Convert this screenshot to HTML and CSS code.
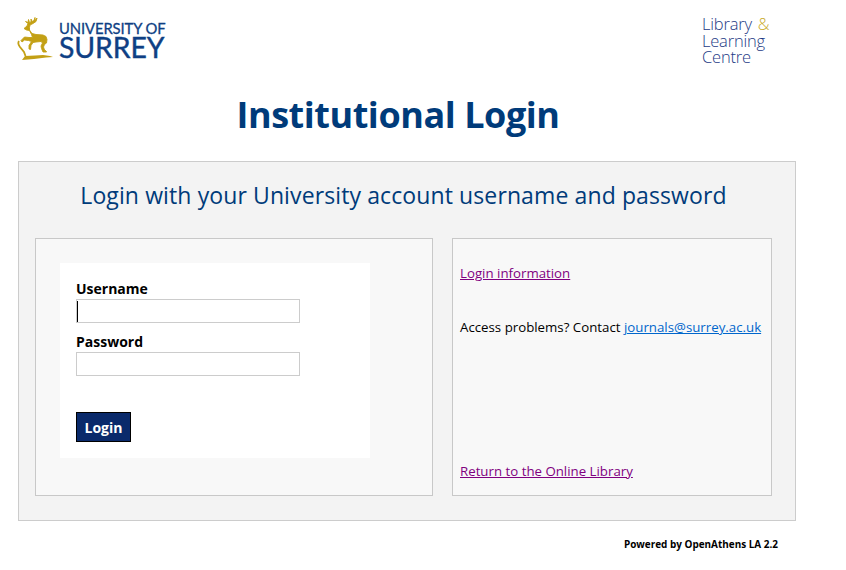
FILE: index.html
```html
<!DOCTYPE html>
<html lang="en">
<head>
<meta charset="utf-8">
<title>Institutional Login</title>
<link rel="stylesheet" href="styles.css">
</head>
<body>
<div class="page">
  <header class="logos">
    <div class="surrey">
      <svg class="stag" width="42" height="50" viewBox="0 0 42 50" aria-hidden="true">
        <path fill="#c3a015" stroke="#c3a015" stroke-width="0.900" stroke-linejoin="round" d="M10 14.500l3-2.500 1-2.500-2.500-2 2.500 1 .5-3 1 3 1.500-.5 0-3 1 2.500 2-1 1-3 0 3 2-2.500-1 3.500-3 2-3 1.500-.5 2.500 0 2.500 2.500 3.500 4 1 7 .5 3 1.500 1 3-.5 3.500-2 1.500-1 2.500 1 3 1.500 1 .5 1-3.500 0-1.500-3.500-.5-2.500 1.500-3-1.500-1.500-5 .5-3 .5-2 3-.5 4-1.500-.5 0-3.500 2.500-4-3-1-4-.5-2.500 2-1-1.500 3.500-3.500 4.500.5 3.500 0-1-3-2-4-3-.5z"/>
        <path fill="none" stroke="#c3a015" stroke-width="1.800" d="M5 27c-1.500 2-.5 4 1 6l4 5 1.500 4"/>
        <path fill="#c3a015" d="M8 46l3-4 10-.5 8-.5 7 1 3 1-7 .5-12 1.500z"/>
      </svg>
      <div class="wordmark">
        <span class="uni">UNIVERSITY OF</span>
        <span class="sur">SURREY</span>
      </div>
    </div>
    <div class="llc">Library <span class="amp">&amp;</span><br>Learning<br>Centre</div>
  </header>
  <h1 class="title">Institutional Login</h1>
  <main class="outer">
    <h2 class="sub">Login with your University account username and password</h2>
    <div class="cols">
      <section class="panel left">
        <form class="form">
          <label class="label" for="u">Username</label>
          <div class="input focus" id="u"><span class="caret"></span></div>
          <label class="label second" for="p">Password</label>
          <div class="input" id="p"></div>
          <button type="button" class="btn">Login</button>
        </form>
      </section>
      <section class="panel right">
        <p class="info"><a class="visited" href="#">Login information</a></p>
        <p class="access">Access problems? Contact <a class="mail" href="#">journals@surrey.ac.uk</a></p>
        <p class="ret"><a class="visited" href="#">Return to the Online Library</a></p>
      </section>
    </div>
  </main>
  <footer class="foot">Powered by OpenAthens LA 2.2</footer>
</div>
</body>
</html>
```
FILE: styles.css
```css
* { box-sizing: border-box; }
html, body { margin: 0; padding: 0; background: #fff; }
body { font-family: "Open Sans", "Liberation Sans", sans-serif; color: #000; }
.page { width: 846px; height: 570px; overflow: hidden; padding-left: 18px; }
.logos { height: 91px; width: 760px; display: flex; justify-content: space-between; align-items: flex-start; }
.surrey { display: flex; align-items: flex-start; margin-top: 14px; gap: 3px; margin-left: -4px; }
.wordmark { display: flex; flex-direction: column; color: #0f3f84; font-family: "Lato", sans-serif; padding-top: 8px; white-space: nowrap; }
.uni { font-size: 14.800px; line-height: 13px; letter-spacing: -0.1px; font-weight: 400; -webkit-text-stroke: 0.3px #0f3f84; }
.sur { font-size: 28.400px; line-height: 24px; letter-spacing: -0.1px; font-weight: 400; -webkit-text-stroke: 0.4px #0f3f84; }
.llc { margin-top: 16px; color: #1d3a85; font-weight: 300; font-size: 16.500px; line-height: 16.700px; letter-spacing: -0.2px; margin-right: 9px; width: 67px; white-space: nowrap; }
.amp { color: #c9ac2c; margin-left: 2px; }
.title { margin: 0; width: 760px; text-align: center; color: #003b7a; font-size: 36px; line-height: 48px; font-weight: 700; height: 70px; letter-spacing: -0.45px; }
.outer { width: 778px; height: 360px; background: #f3f3f3; border: 1px solid #ccc; padding: 16px 23px 0 16px; }
.sub { margin: 0; text-align: center; color: #003b7a; font-size: 23px; line-height: 34px; font-weight: 400; height: 60px; letter-spacing: 0.11px; }
.cols { display: flex; gap: 19px; }
.panel { height: 258px; background: #f8f8f8; border: 1px solid #c8c8c8; }
.left { width: 398px; padding: 24px 62px 0 24px; }
.right { width: 320px; padding: 24px 7px 0; font-size: 13.270px; line-height: 20px; white-space: nowrap; }
.form { background: #fff; height: 195px; padding: 16px 16px 0; display: flex; flex-direction: column; align-items: flex-start; }
.label { font-size: 14px; font-weight: 700; line-height: 20px; }
.second { margin-top: 9px; }
.input { width: 224px; height: 24px; background: #fff; border: 1px solid #ccc; flex: none; }
.focus { padding-top: 1px; }
.caret { display: block; width: 1px; height: 21px; background: #000; }
.btn { margin-top: 36px; width: 55px; height: 30px; background: #0a2a6b; border: 1px solid #000; color: #fff; font-family: inherit; font-weight: 700; font-size: 14px; padding: 0; }
.right p { margin: 0; }
.info { height: 54px; }
.access { height: 144px; }
.visited { color: #800080; }
.mail { color: #0066cc; }
.foot { width: 760px; text-align: right; font-size: 9.950px; font-weight: 700; line-height: 14px; margin-top: 16px; }
```
